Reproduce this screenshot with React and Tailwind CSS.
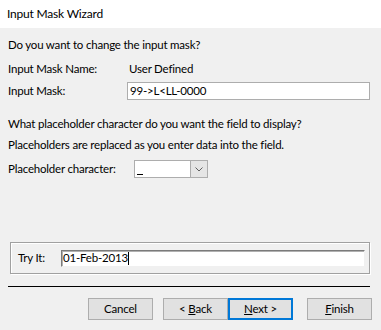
import React from "react";

const font = { fontFamily: 'Lato, "Noto Sans", sans-serif', letterSpacing: "-0.2px" };

function Btn({ children, focused }) {
  return (
    <div
      className={
        "h-[22px] w-[65px] flex items-center justify-center bg-[#e1e1e1] text-black " +
        (focused ? "border-2 border-[#0078d7]" : "border border-[#adadad]")
      }
    >
      <span>{children}</span>
    </div>
  );
}

export default function App() {
  return (
    <div
      className="w-[381px] h-[330px] bg-[#f0f0f0] text-black text-[11.5px] leading-[16px] flex flex-col"
      style={font}
    >
      <div className="h-[28px] bg-white flex items-center pl-[7px] text-[12px]">
        Input Mask Wizard
      </div>
      <div className="pl-[8px] pr-[11px] flex flex-col">
        <div className="mt-[9px] h-[16px]">Do you want to change the input mask?</div>
        <div className="mt-[8px] h-[16px] flex">
          <div className="w-[121px]">Input Mask Name:</div>
          <div>User Defined</div>
        </div>
        <div className="mt-[5px] h-[18px] flex items-center">
          <div className="w-[119px]">Input Mask:</div>
          <div className="flex-1 h-[18px] bg-white border border-[#adadad] flex items-center pl-[2px] leading-[14px]">
            99-&gt;L&lt;LL-0000
          </div>
        </div>
        <div className="mt-[16px] h-[16px]">What placeholder character do you want the field to display?</div>
        <div className="mt-[5px] h-[16px]">Placeholders are replaced as you enter data into the field.</div>
        <div className="mt-[7px] h-[18px] flex items-center">
          <div className="w-[126px]">Placeholder character:</div>
          <div className="w-[74px] h-[18px] bg-white border border-[#adadad] flex">
            <div className="flex-1 flex items-end pl-[2px] pb-[2px]">
              <div className="w-[6px] h-[1px] bg-black" />
            </div>
            <div className="w-[17px] h-full bg-[#e5e5e5] border-l border-[#adadad] flex items-center justify-center">
              <svg width="8" height="5" viewBox="0 0 8 5">
                <path d="M0.5 0.5 L4 4 L7.5 0.5" fill="none" stroke="#606060" strokeWidth="1" />
              </svg>
            </div>
          </div>
        </div>
        <div className="mt-[64px] ml-[2px] w-[360px] h-[32px] border border-[#a0a0a0] shadow-[inset_1px_1px_0_#ffffff,1px_1px_0_#ffffff] flex items-center pl-[7px]">
          <div className="w-[43px]">Try It:</div>
          <div className="w-[304px] h-[17px] bg-white border-t border-l border-[#7a7a7a] border-r border-b border-r-[#f0f0f0] border-b-[#f0f0f0] shadow-[inset_1px_1px_0_#b0b0b0] flex items-center pl-[1px] leading-[14px]">
            <span>01-Feb-2013</span><span className="inline-block w-[1px] h-[13px] bg-black" />
          </div>
        </div>
        <div className="mt-[12px] w-[362px] h-[1px] bg-black" />
        <div className="mt-[11px] flex items-center">
          <div className="ml-[80px]"><Btn>Cancel</Btn></div>
          <div className="ml-[10px]"><Btn>&lt; <u>B</u>ack</Btn></div>
          <div className="ml-[0px]"><Btn focused><u>N</u>ext &gt;</Btn></div>
          <div className="ml-[14px]"><Btn><u>F</u>inish</Btn></div>
        </div>
      </div>
    </div>
  );
}
